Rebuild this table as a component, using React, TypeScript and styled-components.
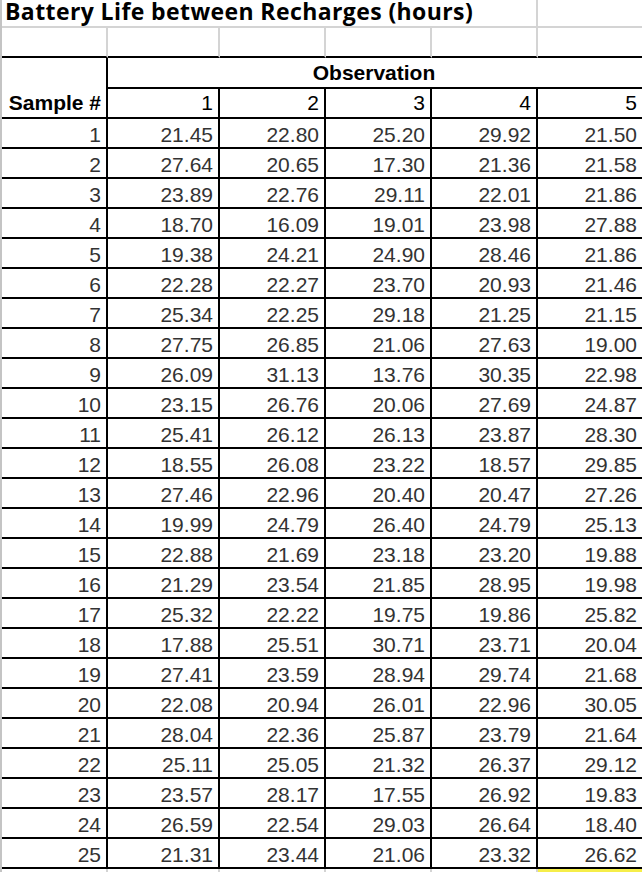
import React from "react";
import styled, { createGlobalStyle } from "styled-components";

const GRAY = "#d4d4d4";
const BLACK = "#000";

type Line = "gray" | "black" | "none";

const Global = createGlobalStyle`
  html, body { margin: 0; padding: 0; background: #fff; }
  body { width: 642px; height: 872px; overflow: hidden; }
  #root { width: 642px; height: 872px; }
`;

const Sheet = styled.div`
  width: 642px;
  height: 872px;
  overflow: hidden;
  box-sizing: border-box;
  border-left: 2px solid #c4c4c4;
  display: grid;
  grid-template-columns: 106px 112px 106px 106px 106px 106px;
  grid-template-rows: 28px 30px 31px 30px repeat(25, 30px) 30px;
  font-family: "Liberation Sans", Arial, sans-serif;
`;

const lineColor = (l: Line) => (l === "none" ? "transparent" : l === "gray" ? GRAY : BLACK);

const Cell = styled.div<{
  $right?: Line;
  $bottom?: Line;
  $align?: "left" | "right" | "center";
  $v?: "center" | "end";
  $bold?: boolean;
  $ink?: string;
  $fill?: string;
}>`
  box-sizing: border-box;
  display: flex;
  min-width: 0;
  white-space: nowrap;
  border-right: 2px solid ${(p) => lineColor(p.$right ?? "black")};
  border-bottom: 2px solid ${(p) => lineColor(p.$bottom ?? "black")};
  justify-content: ${(p) =>
    p.$align === "left" ? "flex-start" : p.$align === "center" ? "center" : "flex-end"};
  align-items: ${(p) => (p.$v === "center" ? "center" : "flex-end")};
  padding: 0 5px 0 3px;
  font-size: 21px;
  font-weight: ${(p) => (p.$bold ? 700 : 400)};
  color: ${(p) => p.$ink ?? "#333"};
  background: ${(p) => p.$fill ?? "transparent"};
`;

const TitleCell = styled.div`
  grid-column: 1 / 6;
  box-sizing: border-box;
  display: flex;
  align-items: flex-start;
  padding-left: 3px;
  border-right: 2px solid ${GRAY};
  border-bottom: 2px solid ${GRAY};
  white-space: nowrap;
  overflow: visible;
`;

const Title = styled.span`
  font-family: "Open Sans", Lato, sans-serif;
  font-weight: 700;
  font-size: 23px;
  line-height: 22px;
  letter-spacing: 0.4px;
  color: #000;
`;

const SampleHeader = styled(Cell)`
  grid-row: 3 / 5;
  padding-bottom: 2px;
`;

const ObservationHeader = styled(Cell)`
  grid-column: 2 / 7;
`;

const data: string[][] = [
  ["21.45", "22.80", "25.20", "29.92", "21.50"],
  ["27.64", "20.65", "17.30", "21.36", "21.58"],
  ["23.89", "22.76", "29.11", "22.01", "21.86"],
  ["18.70", "16.09", "19.01", "23.98", "27.88"],
  ["19.38", "24.21", "24.90", "28.46", "21.86"],
  ["22.28", "22.27", "23.70", "20.93", "21.46"],
  ["25.34", "22.25", "29.18", "21.25", "21.15"],
  ["27.75", "26.85", "21.06", "27.63", "19.00"],
  ["26.09", "31.13", "13.76", "30.35", "22.98"],
  ["23.15", "26.76", "20.06", "27.69", "24.87"],
  ["25.41", "26.12", "26.13", "23.87", "28.30"],
  ["18.55", "26.08", "23.22", "18.57", "29.85"],
  ["27.46", "22.96", "20.40", "20.47", "27.26"],
  ["19.99", "24.79", "26.40", "24.79", "25.13"],
  ["22.88", "21.69", "23.18", "23.20", "19.88"],
  ["21.29", "23.54", "21.85", "28.95", "19.98"],
  ["25.32", "22.22", "19.75", "19.86", "25.82"],
  ["17.88", "25.51", "30.71", "23.71", "20.04"],
  ["27.41", "23.59", "28.94", "29.74", "21.68"],
  ["22.08", "20.94", "26.01", "22.96", "30.05"],
  ["28.04", "22.36", "25.87", "23.79", "21.64"],
  ["25.11", "25.05", "21.32", "26.37", "29.12"],
  ["23.57", "28.17", "17.55", "26.92", "19.83"],
  ["26.59", "22.54", "29.03", "26.64", "18.40"],
  ["21.31", "23.44", "21.06", "23.32", "26.62"],
];

export default function App() {
  return (
    <>
      <Global />
      <Sheet>
        <TitleCell>
          <Title>Battery Life between Recharges (hours)</Title>
        </TitleCell>
        <Cell $right="gray" $bottom="gray" />

        {[0, 1, 2, 3, 4, 5].map((i) => (
          <Cell key={`e${i}`} $right="gray" $bottom="black" />
        ))}

        <SampleHeader $bold $ink="#000">
          Sample #
        </SampleHeader>
        <ObservationHeader $right="none" $align="center" $v="center" $bold $ink="#000">
          Observation
        </ObservationHeader>
        {[1, 2, 3, 4, 5].map((n) => (
          <Cell key={`h${n}`} $v="center" $ink="#000">
            {n}
          </Cell>
        ))}

        {data.map((row, r) => (
          <React.Fragment key={`r${r}`}>
            <Cell>{r + 1}</Cell>
            {row.map((v, c) => (
              <Cell key={`c${c}`}>{v}</Cell>
            ))}
          </React.Fragment>
        ))}

        {[0, 1, 2, 3, 4].map((i) => (
          <Cell key={`z${i}`} $right="gray" $bottom="gray" />
        ))}
        <Cell $right="gray" $bottom="gray" $fill="#f6ee4a" />
      </Sheet>
    </>
  );
}
